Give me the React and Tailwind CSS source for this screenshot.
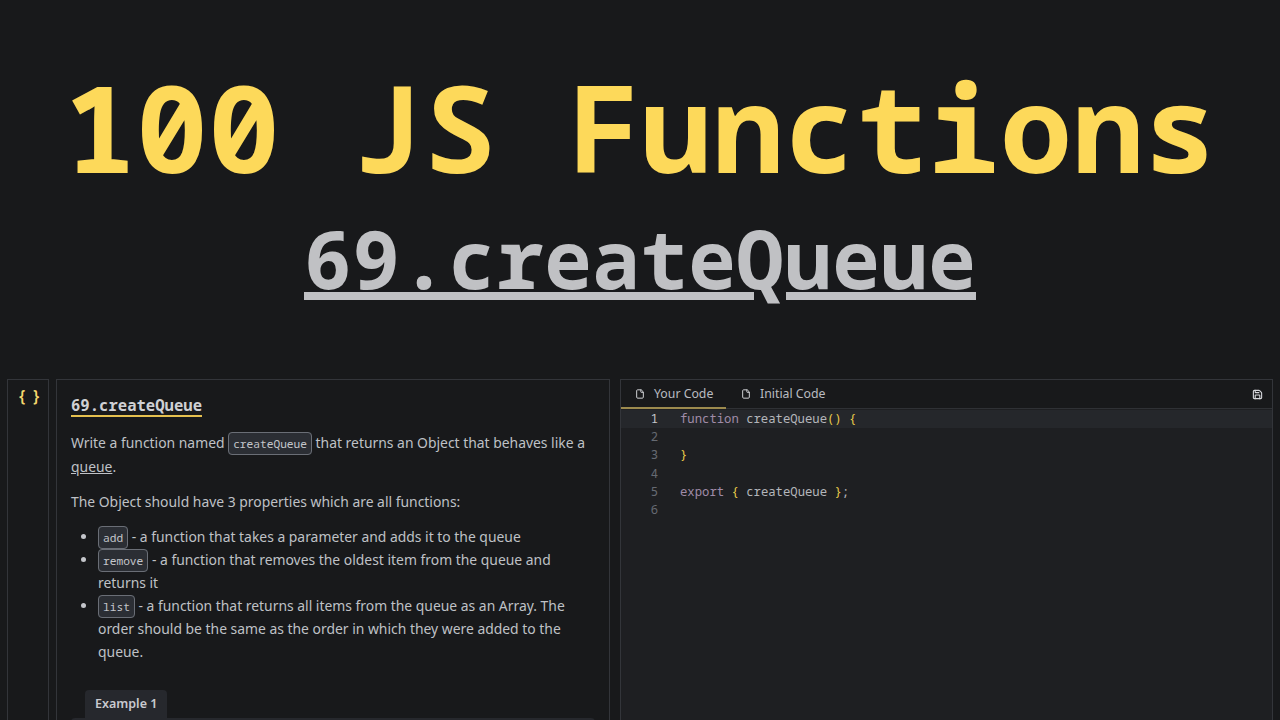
import React from "react";
import { File, Save } from "lucide-react";

const mono = "font-['Noto_Sans_Mono','DejaVu_Sans_Mono',monospace]";

const Code = ({ children }) => (
  <code className={`${mono} rounded-[4px] border border-[#6a6e76] bg-[#2b2e34] px-[4px] py-[3px] text-[11.2px] text-[#c4c6cb]`}>
    {children}
  </code>
);

const Y = ({ children }) => <span className="text-[#e9cb4a]">{children}</span>;
const K = ({ children }) => <span className="text-[#a08ca8]">{children}</span>;

const lines = [
  <><K>function</K> createQueue<Y>()</Y> <Y>{"{"}</Y></>,
  "",
  <Y>{"}"}</Y>,
  "",
  <><K>export</K> <Y>{"{"}</Y> createQueue <Y>{"}"}</Y>;</>,
  "",
];

export default function App() {
  return (
    <div className="flex h-[720px] w-[1280px] flex-col overflow-hidden bg-[#18191b] font-['Noto_Sans',sans-serif]">
      <header className={`${mono} flex h-[379px] shrink-0 flex-col items-center font-bold`}>
        <h1 className="mt-[57px] whitespace-pre text-[120px] leading-[140px] text-[#fdd95a]">100 JS Functions</h1>
        <h2 className="mt-[14px] text-[80px] leading-[94px] text-[#c0c1c4] underline decoration-[8px] underline-offset-[3px]">69.createQueue</h2>
      </header>

      <main className="flex min-h-0 flex-1 pl-[7px]">
        <aside className={`${mono} h-[360px] w-[42px] shrink-0 border border-[#33353a] pt-[4px] text-center text-[16px] font-semibold tracking-[-2.5px] text-[#f5d76e]`}>
          {"{ }"}
        </aside>

        <section className="ml-[7px] h-[360px] w-[554px] shrink-0 overflow-hidden border border-[#33353a] px-[14px] pt-[15px] text-[13.9px] leading-[22.4px] text-[#bfc1c6]">
          <h3 className={`${mono} inline-block border-b-2 border-[#e5c04f] text-[15.6px] font-bold leading-[20px] text-[#cfd0d4]`}>69.createQueue</h3>
          <p className="mt-[14.7px]">
            Write a function named <Code>createQueue</Code> that returns an Object that behaves like a <span className="underline">queue</span>.
          </p>
          <p className="mt-[13px]">The Object should have 3 properties which are all functions:</p>
          <ul className="mt-[12.3px] list-disc pl-[27px] marker:text-[#c4c6cb]">
            <li><Code>add</Code> - a function that takes a parameter and adds it to the queue</li>
            <li><Code>remove</Code> - a function that removes the oldest item from the queue and returns it</li>
            <li><Code>list</Code> - a function that returns all items from the queue as an Array. The order should be the same as the order in which they were added to the queue.</li>
          </ul>
          <div className="ml-[14px] mt-[27px] w-fit rounded-t-[4px] bg-[#26282d] px-[10px] pb-[3px] pt-[3px] text-[12.5px] font-semibold text-[#c9cacf]">Example 1</div>
          <div className="h-[8px] rounded-t-[4px] bg-[#26282d]" />
        </section>

        <section className="ml-[10px] h-[360px] w-[653px] shrink-0 overflow-hidden border border-[#33353a]">
          <div className="flex h-[29px] items-center border-b border-[#2f3135] text-[12.3px] text-[#b9bbc0]">
            <div className="flex h-[29px] w-[105px] items-center gap-[9px] border-y-2 border-t-transparent border-b-[#9c8a4e] pl-[14px]">
              <File size={10} strokeWidth={2.4} className="text-[#cfd0d4]" />
              <span>Your Code</span>
            </div>
            <div className="flex items-center gap-[9px] pl-[15px]">
              <File size={10} strokeWidth={2.4} className="text-[#cfd0d4]" />
              <span>Initial Code</span>
            </div>
            <Save size={11} strokeWidth={2.4} className="ml-auto mr-[9px] text-[#d6d7db]" />
          </div>
          <div className={`${mono} h-[330px] bg-[#1e1f22] pt-[1px] text-[12.25px] leading-[18.2px] text-[#b4b6bb]`}>
            {lines.map((line, i) => (
              <div key={i} className={`flex h-[18.2px] ${i === 0 ? "bg-[#25272b]" : ""}`}>
                <span className={`w-[37px] shrink-0 text-right ${i === 0 ? "text-[#c4c6cb]" : "text-[#666a72]"}`}>{i + 1}</span>
                <span className="ml-[22px] whitespace-pre">{line}</span>
              </div>
            ))}
          </div>
        </section>
      </main>
    </div>
  );
}
